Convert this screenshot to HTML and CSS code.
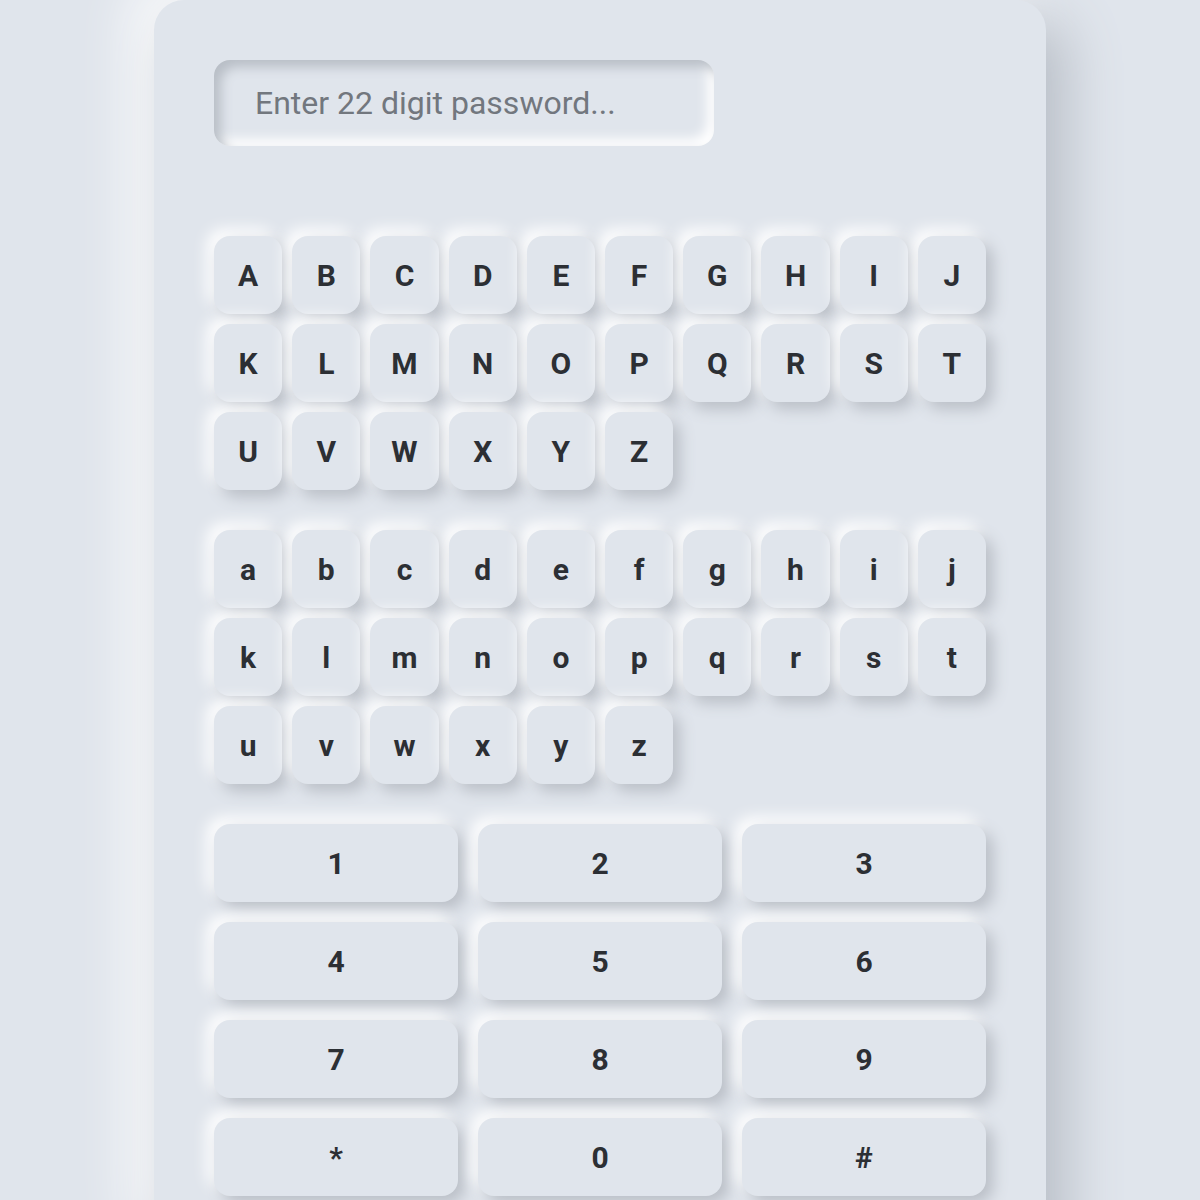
FILE: index.html
```html
<!DOCTYPE html>
<html>
<head>
<meta charset="utf-8">
<link rel="stylesheet" href="styles.css">
</head>
<body>
<div class="card">
  <input class="pw" type="text" placeholder="Enter 22 digit password...">
  <div class="keys upper">
    <div class="key">A</div><div class="key">B</div><div class="key">C</div><div class="key">D</div><div class="key">E</div><div class="key">F</div><div class="key">G</div><div class="key">H</div><div class="key">I</div><div class="key">J</div>
    <div class="key">K</div><div class="key">L</div><div class="key">M</div><div class="key">N</div><div class="key">O</div><div class="key">P</div><div class="key">Q</div><div class="key">R</div><div class="key">S</div><div class="key">T</div>
    <div class="key">U</div><div class="key">V</div><div class="key">W</div><div class="key">X</div><div class="key">Y</div><div class="key">Z</div>
  </div>
  <div class="keys lower">
    <div class="key">a</div><div class="key">b</div><div class="key">c</div><div class="key">d</div><div class="key">e</div><div class="key">f</div><div class="key">g</div><div class="key">h</div><div class="key">i</div><div class="key">j</div>
    <div class="key">k</div><div class="key">l</div><div class="key">m</div><div class="key">n</div><div class="key">o</div><div class="key">p</div><div class="key">q</div><div class="key">r</div><div class="key">s</div><div class="key">t</div>
    <div class="key">u</div><div class="key">v</div><div class="key">w</div><div class="key">x</div><div class="key">y</div><div class="key">z</div>
  </div>
  <div class="nums">
    <div class="key">1</div><div class="key">2</div><div class="key">3</div>
    <div class="key">4</div><div class="key">5</div><div class="key">6</div>
    <div class="key">7</div><div class="key">8</div><div class="key">9</div>
    <div class="key">*</div><div class="key">0</div><div class="key">#</div>
  </div>
</div>
</body>
</html>
```
FILE: styles.css
```css
html, body {
  margin: 0;
  padding: 0;
  background: #e0e5ec;
  font-family: Roboto, "Liberation Sans", sans-serif;
}
body {
  overflow: hidden;
  height: 1200px;
}
.card {
  box-sizing: border-box;
  width: 892px;
  margin: 0 auto;
  padding: 60px 60px 60px 60px;
  background: #e0e5ec;
  border-radius: 30px;
  box-shadow: 20px 20px 55px #b6bcc5, -20px -20px 55px #ffffff;
}
.pw {
  display: block;
  box-sizing: border-box;
  width: 500px;
  height: 86px;
  margin: 0 0 90px 0;
  padding: 0 0 0 41px;
  border: none;
  outline: none;
  border-radius: 16px;
  background: #e0e5ec;
  font-family: Roboto, "Liberation Sans", sans-serif;
  font-size: 32px;
  color: #5f646b;
  box-shadow: inset 7px 7px 12px #b8bec6, inset -7px -7px 12px #ffffff;
}
.pw::placeholder {
  color: #72777e;
}
.keys {
  display: grid;
  width: 772px;
  grid-template-columns: repeat(10, 1fr);
  grid-auto-rows: 78px;
  gap: 10px;
  margin-bottom: 40px;
}
.key {
  display: flex;
  align-items: center;
  justify-content: center;
  background: #e0e5ec;
  border-radius: 16px;
  font-size: 30px;
  font-weight: 700;
  color: #2c2f34;
  box-shadow: 7px 7px 15px #b9bec6, -7px -7px 15px #ffffff;
}
.nums {
  display: grid;
  width: 772px;
  grid-template-columns: repeat(3, 1fr);
  grid-auto-rows: 78px;
  gap: 20px;
}
```
